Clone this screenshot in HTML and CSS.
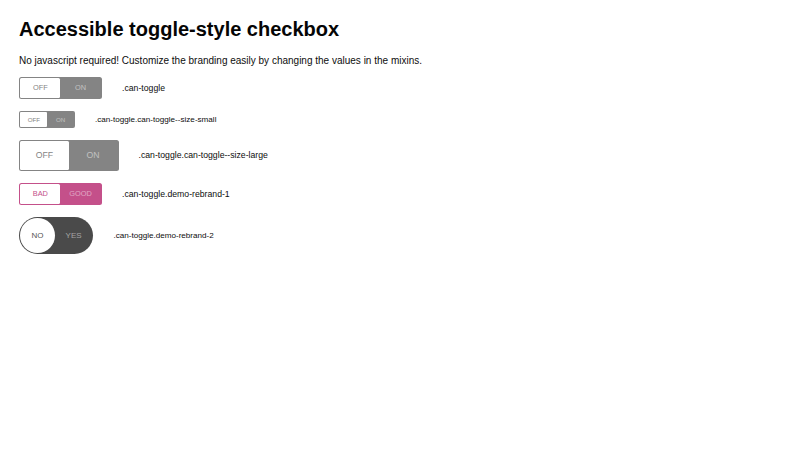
FILE: index.html
```html
<!DOCTYPE html>
<html lang="en">
<head>
<meta charset="utf-8">
<title>Accessible toggle-style checkbox</title>
<link rel="stylesheet" href="styles.css">
</head>
<body>
<main class="page">
  <h1 class="title">Accessible toggle-style checkbox</h1>
  <p class="intro">No javascript required! Customize the branding easily by changing the values in the mixins.</p>

  <div class="toggles">
    <label class="can-toggle">
      <input type="checkbox" class="can-toggle__input">
      <span class="can-toggle__switch"><span class="can-toggle__off">OFF</span><span class="can-toggle__on">ON</span></span>
      <span class="can-toggle__label-text">.can-toggle</span>
    </label>

    <label class="can-toggle can-toggle--size-small">
      <input type="checkbox" class="can-toggle__input">
      <span class="can-toggle__switch"><span class="can-toggle__off">OFF</span><span class="can-toggle__on">ON</span></span>
      <span class="can-toggle__label-text">.can-toggle.can-toggle--size-small</span>
    </label>

    <label class="can-toggle can-toggle--size-large">
      <input type="checkbox" class="can-toggle__input">
      <span class="can-toggle__switch"><span class="can-toggle__off">OFF</span><span class="can-toggle__on">ON</span></span>
      <span class="can-toggle__label-text">.can-toggle.can-toggle--size-large</span>
    </label>

    <label class="can-toggle demo-rebrand-1">
      <input type="checkbox" class="can-toggle__input">
      <span class="can-toggle__switch"><span class="can-toggle__off">BAD</span><span class="can-toggle__on">GOOD</span></span>
      <span class="can-toggle__label-text">.can-toggle.demo-rebrand-1</span>
    </label>

    <label class="can-toggle demo-rebrand-2">
      <input type="checkbox" class="can-toggle__input">
      <span class="can-toggle__switch"><span class="can-toggle__off">NO</span><span class="can-toggle__on">YES</span></span>
      <span class="can-toggle__label-text">.can-toggle.demo-rebrand-2</span>
    </label>
  </div>
</main>
</body>
</html>
```

FILE: styles.css
```css
html, body {
  margin: 0;
  background: #ffffff;
}

body {
  font-family: "Liberation Sans", Arial, sans-serif;
  color: #111;
}

.page {
  padding: 18px 19px;
}

.title {
  margin: 0;
  font-size: 20px;
  line-height: 22px;
  font-weight: 700;
  color: #050505;
}

.intro {
  margin: 14.5px 0 0;
  font-size: 10px;
  line-height: 12px;
  color: #0d0d0d;
}

.toggles {
  margin-top: 10.3px;
  display: flex;
  flex-direction: column;
  align-items: flex-start;
  gap: 11.7px;
}

/* ---- toggle base ---- */
.can-toggle {
  display: flex;
  align-items: center;
  cursor: pointer;
}

.can-toggle__input {
  position: absolute;
  opacity: 0;
  width: 0;
  height: 0;
  margin: 0;
}

.can-toggle__switch {
  --off-color: #848484;
  display: flex;
  box-sizing: border-box;
  flex: 0 0 83px;
  height: 22.3px;
  padding: 1.2px;
  border-radius: 2.5px;
  background: var(--off-color);
  font-size: 7.4px;
  text-transform: uppercase;
}

.can-toggle__off,
.can-toggle__on {
  display: flex;
  align-items: center;
  justify-content: center;
}

.can-toggle__off {
  flex: 0 0 40.3px;
  background: #ffffff;
  border-radius: 1.5px;
  color: var(--off-color);
}

.can-toggle__on {
  flex: 1;
  color: rgba(255, 255, 255, 0.5);
}

.can-toggle__label-text {
  padding-left: 20px;
  font-size: 8.7px;
  color: #0d0d0d;
}

/* ---- sizes ---- */
.can-toggle--size-small .can-toggle__switch {
  flex-basis: 56px;
  height: 17.4px;
  border-radius: 2px;
  font-size: 6.2px;
}

.can-toggle--size-small .can-toggle__off {
  flex-basis: 27.3px;
  border-radius: 1px;
}

.can-toggle--size-small .can-toggle__label-text {
  font-size: 8.1px;
}

.can-toggle--size-large .can-toggle__switch {
  flex-basis: 99.5px;
  height: 31px;
  border-radius: 2.5px;
  font-size: 8.7px;
}

.can-toggle--size-large .can-toggle__off {
  flex-basis: 48.4px;
}

/* ---- brand variants ---- */
.demo-rebrand-1 .can-toggle__switch {
  --off-color: #c4508a;
}

.demo-rebrand-2 .can-toggle__switch {
  --off-color: #4a4a4a;
  flex-basis: 74.4px;
  height: 37.2px;
  border-radius: 18.6px;
  font-size: 8px;
}

.demo-rebrand-2 .can-toggle__off {
  flex-basis: 34.8px;
  border-radius: 50%;
  color: #555;
}

.demo-rebrand-2 .can-toggle__label-text {
  font-size: 8.1px;
}
```
